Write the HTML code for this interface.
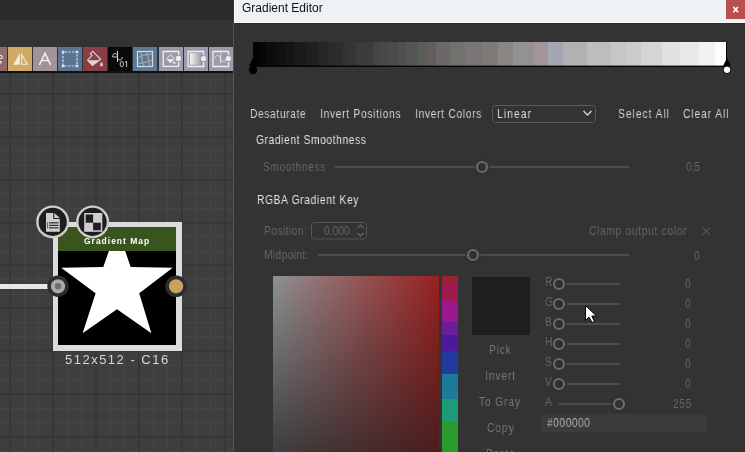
<!DOCTYPE html>
<html><head><meta charset="utf-8">
<style>
html,body{margin:0;padding:0;}
body{width:745px;height:452px;overflow:hidden;position:relative;background:#333333;font-family:"Liberation Sans",sans-serif;}
.a{position:absolute;}
.t{position:absolute;white-space:pre;font-family:"Liberation Sans",sans-serif;will-change:transform;}
svg{position:absolute;left:0;top:0;}
</style></head><body>

<!-- LEFT PANEL -->
<svg class="a" style="left:0;top:0" width="233" height="452" viewBox="0 0 233 452">
  <g transform="translate(0,73)">
    <rect x="0" y="0" width="233" height="379" fill="#3e3e3e"/>
    <g transform="translate(0,-73)"><rect x="-19" y="0" width="1" height="452" fill="#454545"/><rect x="-5" y="0" width="1" height="452" fill="#454545"/><rect x="24" y="0" width="1" height="452" fill="#454545"/><rect x="38" y="0" width="1" height="452" fill="#454545"/><rect x="67" y="0" width="1" height="452" fill="#454545"/><rect x="81" y="0" width="1" height="452" fill="#454545"/><rect x="110" y="0" width="1" height="452" fill="#454545"/><rect x="124" y="0" width="1" height="452" fill="#454545"/><rect x="153" y="0" width="1" height="452" fill="#454545"/><rect x="167" y="0" width="1" height="452" fill="#454545"/><rect x="196" y="0" width="1" height="452" fill="#454545"/><rect x="210" y="0" width="1" height="452" fill="#454545"/><rect x="238" y="0" width="1" height="452" fill="#454545"/><rect x="253" y="0" width="1" height="452" fill="#454545"/><rect x="281" y="0" width="1" height="452" fill="#454545"/><rect x="296" y="0" width="1" height="452" fill="#454545"/><rect x="0" y="65" width="233" height="1" fill="#454545"/><rect x="0" y="79" width="233" height="1" fill="#454545"/><rect x="0" y="108" width="233" height="1" fill="#454545"/><rect x="0" y="122" width="233" height="1" fill="#454545"/><rect x="0" y="150" width="233" height="1" fill="#454545"/><rect x="0" y="165" width="233" height="1" fill="#454545"/><rect x="0" y="193" width="233" height="1" fill="#454545"/><rect x="0" y="208" width="233" height="1" fill="#454545"/><rect x="0" y="236" width="233" height="1" fill="#454545"/><rect x="0" y="251" width="233" height="1" fill="#454545"/><rect x="0" y="279" width="233" height="1" fill="#454545"/><rect x="0" y="294" width="233" height="1" fill="#454545"/><rect x="0" y="322" width="233" height="1" fill="#454545"/><rect x="0" y="336" width="233" height="1" fill="#454545"/><rect x="0" y="365" width="233" height="1" fill="#454545"/><rect x="0" y="379" width="233" height="1" fill="#454545"/><rect x="0" y="408" width="233" height="1" fill="#454545"/><rect x="0" y="422" width="233" height="1" fill="#454545"/><rect x="0" y="451" width="233" height="1" fill="#454545"/><rect x="0" y="465" width="233" height="1" fill="#454545"/><rect x="0" y="494" width="233" height="1" fill="#454545"/><rect x="0" y="508" width="233" height="1" fill="#454545"/><rect x="-34" y="0" width="2" height="452" fill="#373737"/><rect x="9" y="0" width="2" height="452" fill="#373737"/><rect x="52" y="0" width="2" height="452" fill="#373737"/><rect x="95" y="0" width="2" height="452" fill="#373737"/><rect x="138" y="0" width="2" height="452" fill="#373737"/><rect x="181" y="0" width="2" height="452" fill="#373737"/><rect x="224" y="0" width="2" height="452" fill="#373737"/><rect x="266" y="0" width="2" height="452" fill="#373737"/><rect x="0" y="50" width="233" height="2" fill="#373737"/><rect x="0" y="93" width="233" height="2" fill="#373737"/><rect x="0" y="136" width="233" height="2" fill="#373737"/><rect x="0" y="179" width="233" height="2" fill="#373737"/><rect x="0" y="222" width="233" height="2" fill="#373737"/><rect x="0" y="264" width="233" height="2" fill="#373737"/><rect x="0" y="307" width="233" height="2" fill="#373737"/><rect x="0" y="350" width="233" height="2" fill="#373737"/><rect x="0" y="393" width="233" height="2" fill="#373737"/><rect x="0" y="436" width="233" height="2" fill="#373737"/><rect x="0" y="479" width="233" height="2" fill="#373737"/></g>
  </g>
  <rect x="0" y="0" width="233" height="73" fill="#333333" transform="translate(0,0)" opacity="0"/>
</svg>
<div class="a" style="left:0;top:0;width:233px;height:20px;background:#2b2b2b"></div>
<div class="a" style="left:0;top:20px;width:233px;height:51px;background:#333333"></div>
<div class="a" style="left:0;top:71px;width:233px;height:2px;background:#111111"></div>

<!-- toolbar icons -->
<svg class="a" width="233" height="80" viewBox="0 0 233 80">
  <rect x="-17" y="47" width="24" height="24" fill="#8f6a6e"/>
  <rect x="8" y="47" width="24" height="24" fill="#cfa965"/>
  <rect x="33" y="47" width="24" height="24" fill="#a4929a"/>
  <rect x="58" y="47" width="24" height="24" fill="#587593"/>
  <rect x="83" y="47" width="24" height="24" fill="#8b3e45"/>
  <rect x="108" y="47" width="24" height="24" fill="#0a0a0a"/>
  <rect x="133" y="47" width="24" height="24" fill="#5a7a9a"/>
  <rect x="159" y="47" width="24" height="24" fill="#9c9bab"/>
  <rect x="184" y="47" width="24" height="24" fill="#9c9bab"/>
  <rect x="209" y="47" width="24" height="24" fill="#9c9bab"/>
  <!-- partial icon marks -->
  <path d="M0,55.5 L1.5,55.5 L2.5,57 L1.5,58.5 L0,58.5" fill="none" stroke="#e8e8e8" stroke-width="1.1"/>
  <rect x="0" y="61" width="1.5" height="2.5" fill="#e8e8e8"/>
  <!-- mirror icon -->
  <polygon points="19.8,53 13.2,64.8 19.8,64.8" fill="#ececec"/>
  <polygon points="21.6,54.5 21.6,64.3 27.3,64.3" fill="none" stroke="#ececec" stroke-width="1.1"/>
  <!-- A icon -->
  <path d="M39.4,64.8 L45,53.2 L50.6,64.8 M41.5,60.6 L48.5,60.6" fill="none" stroke="#f0f0f0" stroke-width="1.5"/>
  <!-- dashed square -->
  <rect x="63" y="52" width="14" height="14" fill="none" stroke="#dcdcdc" stroke-width="1.2" stroke-dasharray="2.4,1.3" stroke-dashoffset="-1.6"/>
  <rect x="61.7" y="50.7" width="2.6" height="2.6" fill="#dcdcdc"/>
  <rect x="75.7" y="50.7" width="2.6" height="2.6" fill="#dcdcdc"/>
  <rect x="61.7" y="64.7" width="2.6" height="2.6" fill="#dcdcdc"/>
  <rect x="75.7" y="64.7" width="2.6" height="2.6" fill="#dcdcdc"/>
  <!-- paint bucket -->
  <path d="M92.8,51.3 L100.6,59.3 L92.5,65.4 L87.6,60.2 L92,55.6 L90.3,54 Z" fill="none" stroke="#d8d8d8" stroke-width="1.1"/>
  <polygon points="88,60.3 99.8,60.3 92.5,65.2" fill="#d8d8d8"/>
  <path d="M101.5,61.8 Q103.2,64.3 103,65.3 A1.55,1.55 0 0 1 100,65.3 Q99.8,64.3 101.5,61.8 Z" fill="#d0d0d0"/>
  <!-- sine 01 -->
  <path d="M112.6,57 C112.6,52.2 117.4,52.2 117.4,57 C117.4,61 122.4,61 122.4,57 M112.6,57 L117.4,57" fill="none" stroke="#d0d0d0" stroke-width="0.95"/>
  <rect x="117" y="51" width="1" height="11" fill="#d0d0d0"/>
  <ellipse cx="121.8" cy="64.1" rx="1.7" ry="2.6" fill="none" stroke="#d8d8d8" stroke-width="0.9"/>
  <path d="M125,62.3 L126.6,61.3 L126.6,67" fill="none" stroke="#d8d8d8" stroke-width="0.9"/>
  <!-- cells -->
  <rect x="137.5" y="51.5" width="15" height="15" fill="none" stroke="#e0dcd5" stroke-width="1.2"/>
  <path d="M141.5,55.5 L147.5,54.5 L149,61.5 L142.5,63 Z M141.5,55.5 L138,58 M147.5,54.5 L145.5,51.5 M149,61.5 L152.5,59.5 M142.5,63 L144.5,66.5 M141.5,55.5 L140.5,51.5 M147.5,54.5 L152.5,54 M149,61.5 L149.5,66.5 M142.5,63 L137.5,63.5" fill="none" stroke="#b8b0aa" stroke-width="1"/>
  <!-- bracket icons -->
  <path d="M178.7,55 L178.7,51.5 L163.2,51.5 L163.2,66.4 L178.7,66.4 L178.7,62" fill="none" stroke="#f0f0f0" stroke-width="1.3"/>
  <circle cx="178.4" cy="58.4" r="2.6" fill="#ececec"/>
  <path d="M166.5,59 L170.5,54.5 L174.5,59" fill="none" stroke="#f0f0f0" stroke-width="0.9"/>
  <polygon points="166.3,59.3 174.7,59.3 170.5,63" fill="#f0f0f0"/>
  <rect x="173.4" y="61.8" width="2" height="2" fill="#f0f0f0"/>

  <path d="M203.6,55 L203.6,51.5 L188.1,51.5 L188.1,66.5 L203.6,66.5 L203.6,62" fill="none" stroke="#f0f0f0" stroke-width="1.3"/>
  <defs><linearGradient id="ig" x1="0" x2="1"><stop offset="0" stop-color="#f4f4f4"/><stop offset="1" stop-color="#a8a8a8"/></linearGradient></defs>
  <rect x="190" y="53.2" width="10" height="11.6" fill="url(#ig)"/>
  <circle cx="203.5" cy="58.5" r="2.6" fill="#ececec"/>

  <path d="M228.5,55 L228.5,51.5 L213,51.5 L213,66.5 L228.5,66.5 L228.5,62" fill="none" stroke="#f0f0f0" stroke-width="1.3"/>
  <path d="M215,58.5 C215.5,54.5 219.5,54.5 220.5,58.5 C221.5,62.5 225.5,62.5 226.5,58.5" fill="none" stroke="#e0e0e0" stroke-width="0.9"/>
  <rect x="220.1" y="53.5" width="1" height="10" fill="#e4e4e4"/>
  <circle cx="228.4" cy="58.5" r="2.6" fill="#ececec"/>
</svg>

<!-- node -->
<svg class="a" width="233" height="452" viewBox="0 0 233 452">
  <rect x="0" y="284" width="50" height="5" fill="#e6e6e6"/>
  <rect x="53" y="222" width="129" height="129" fill="#dcdcdc"/>
  <rect x="58" y="227" width="118" height="118" fill="#000"/>
  <polygon fill="#fff" points="117,227.3 130.7,267.1 172.7,267.8 139.2,293.2 151.4,333.3 117,309.2 82.6,333.3 95.6,293.2 61.2,267.8 103.3,267.1"/>
  <rect x="58" y="227" width="118" height="24" fill="#3a5420"/>
  <circle cx="58" cy="286.3" r="10.7" fill="#2d2d2d"/>
  <circle cx="58" cy="286.3" r="7.1" fill="#aaaaaa"/>
  <circle cx="58" cy="286.3" r="3.2" fill="#6f6f6f"/>
  <circle cx="176.1" cy="286.3" r="10.8" fill="#2d2d2d"/>
  <circle cx="176.1" cy="286.3" r="7.1" fill="#c9a25e"/>
  <circle cx="52.7" cy="221.9" r="15.3" fill="#1e1e1e" stroke="#d0cccc" stroke-width="2.4"/>
  <circle cx="92.6" cy="221.9" r="15.3" fill="#1e1e1e" stroke="#d0cccc" stroke-width="2.4"/>
  <path d="M46,213 L53.2,213 L53.2,219 L59.8,219 L59.8,231.8 L46,231.8 Z" fill="#cfcfcf"/>
  <path d="M54.3,213 L59.8,218 L54.3,218 Z" fill="#cfcfcf"/>
  <rect x="49" y="222.3" width="9.5" height="1.1" fill="#1e1e1e"/>
  <rect x="49" y="224.8" width="9.5" height="1.1" fill="#1e1e1e"/>
  <rect x="49" y="227.3" width="9.5" height="1.1" fill="#1e1e1e"/>
  <rect x="47" y="222.3" width="1.1" height="6.1" fill="#1e1e1e" opacity="0.6"/>
  <rect x="84.2" y="213" width="18.1" height="18.8" fill="#cfcfcf"/>
  <rect x="85.7" y="214.5" width="7.4" height="8.2" fill="#1e1e1e"/>
  <rect x="93.1" y="222.7" width="7.7" height="7.6" fill="#1e1e1e"/>
</svg>

<!-- DIALOG -->
<div class="a" style="left:233px;top:23px;width:1px;height:429px;background:#555252"></div>
<div class="a" style="left:234px;top:0;width:511px;height:23px;background:#eef2f5"></div>
<div class="a" style="left:234px;top:0;width:1px;height:23px;background:#fafdff"></div>
<div class="a" style="left:234px;top:22px;width:511px;height:1px;background:#fafdff"></div>
<div class="a" style="left:234px;top:23px;width:511px;height:1px;background:#2a2a2a"></div>
<div class="a" style="left:726px;top:0;width:19px;height:19px;background:#b94f50"></div>
<svg class="a" width="745" height="30" viewBox="0 0 745 30"><path d="M733.4,7 L738,12.2 M738,7 L733.4,12.2" stroke="#fff" stroke-width="1.7"/></svg>

<svg class="a" width="745" height="452" viewBox="0 0 745 452">
  <rect x="253" y="42" width="6" height="24" fill="#020202"/><rect x="259" y="42" width="7" height="24" fill="#060606"/><rect x="266" y="42" width="10" height="24" fill="#0c0c0c"/><rect x="276" y="42" width="9" height="24" fill="#101010"/><rect x="285" y="42" width="9" height="24" fill="#151515"/><rect x="294" y="42" width="13" height="24" fill="#1a1a1a"/><rect x="307" y="42" width="11" height="24" fill="#1f1f1f"/><rect x="318" y="42" width="10" height="24" fill="#262626"/><rect x="328" y="42" width="7" height="24" fill="#2a2a2a"/><rect x="335" y="42" width="8" height="24" fill="#2d2d2d"/><rect x="343" y="42" width="6" height="24" fill="#333333"/><rect x="349" y="42" width="7" height="24" fill="#363434"/><rect x="356" y="42" width="17" height="24" fill="#3c3c3c"/><rect x="373" y="42" width="7" height="24" fill="#444444"/><rect x="380" y="42" width="9" height="24" fill="#484848"/><rect x="389" y="42" width="5" height="24" fill="#4b4b4b"/><rect x="394" y="42" width="4" height="24" fill="#4e4846"/><rect x="398" y="42" width="8" height="24" fill="#4f4f55"/><rect x="406" y="42" width="11" height="24" fill="#555555"/><rect x="417" y="42" width="11" height="24" fill="#5b5d58"/><rect x="428" y="42" width="8" height="24" fill="#665d5d"/><rect x="436" y="42" width="14" height="24" fill="#6a6868"/><rect x="450" y="42" width="15" height="24" fill="#70726d"/><rect x="465" y="42" width="17" height="24" fill="#7a7574"/><rect x="482" y="42" width="16" height="24" fill="#807a77"/><rect x="498" y="42" width="15" height="24" fill="#888784"/><rect x="513" y="42" width="21" height="24" fill="#909293"/><rect x="534" y="42" width="14" height="24" fill="#a39599"/><rect x="548" y="42" width="15" height="24" fill="#a6a6b3"/><rect x="563" y="42" width="24" height="24" fill="#b2b0b0"/><rect x="587" y="42" width="24" height="24" fill="#bebebe"/><rect x="611" y="42" width="15" height="24" fill="#c6c6c6"/><rect x="626" y="42" width="15" height="24" fill="#cbcbcb"/><rect x="641" y="42" width="21" height="24" fill="#d5d5d5"/><rect x="662" y="42" width="18" height="24" fill="#e1e1e1"/><rect x="680" y="42" width="19" height="24" fill="#e9e9e9"/><rect x="699" y="42" width="11" height="24" fill="#f2f2f2"/><rect x="710" y="42" width="5" height="24" fill="#eef2f5"/><rect x="715" y="42" width="12" height="24" fill="#fdfdfd"/>
  <rect x="253" y="65.6" width="474.5" height="1.3" fill="#000"/>
  <rect x="726" y="42" width="1" height="24" fill="#000"/>
  <polygon points="253,58 249,66 257,66" fill="#000"/>
  <circle cx="253" cy="70" r="4.2" fill="#000"/>
  <polygon points="727,58 723,66 731,66" fill="#000"/>
  <circle cx="727" cy="69.8" r="3.8" fill="#fff" stroke="#000" stroke-width="1"/>

  <!-- dropdown -->
  <rect x="492.5" y="105.5" width="103" height="17" rx="3" fill="#333" stroke="#5a5a5a" stroke-width="1"/>
  <polyline points="583.5,111 587.5,115 591.5,111" fill="none" stroke="#cfcfcf" stroke-width="1.5"/>

  <rect x="335" y="166" width="294" height="2" fill="#4d4d4d"/><circle cx="482" cy="167" r="7.5" fill="#303030"/><circle cx="482" cy="167" r="5" fill="none" stroke="#6b6b68" stroke-width="2.2"/><rect x="318" y="254" width="311" height="2" fill="#4d4d4d"/><circle cx="473" cy="255" r="7.5" fill="#303030"/><circle cx="473" cy="255" r="5" fill="none" stroke="#6b6b68" stroke-width="2.2"/><rect x="559" y="283" width="61" height="2" fill="#4d4d4d"/><circle cx="559" cy="284" r="7.5" fill="#303030"/><circle cx="559" cy="284" r="5" fill="none" stroke="#6b6b68" stroke-width="2.2"/><rect x="559" y="303" width="61" height="2" fill="#4d4d4d"/><circle cx="559" cy="304" r="7.5" fill="#303030"/><circle cx="559" cy="304" r="5" fill="none" stroke="#6b6b68" stroke-width="2.2"/><rect x="559" y="323" width="61" height="2" fill="#4d4d4d"/><circle cx="559" cy="324" r="7.5" fill="#303030"/><circle cx="559" cy="324" r="5" fill="none" stroke="#6b6b68" stroke-width="2.2"/><rect x="559" y="343" width="61" height="2" fill="#4d4d4d"/><circle cx="559" cy="344" r="7.5" fill="#303030"/><circle cx="559" cy="344" r="5" fill="none" stroke="#6b6b68" stroke-width="2.2"/><rect x="559" y="363" width="61" height="2" fill="#4d4d4d"/><circle cx="559" cy="364" r="7.5" fill="#303030"/><circle cx="559" cy="364" r="5" fill="none" stroke="#6b6b68" stroke-width="2.2"/><rect x="559" y="383" width="61" height="2" fill="#4d4d4d"/><circle cx="559" cy="384" r="7.5" fill="#303030"/><circle cx="559" cy="384" r="5" fill="none" stroke="#6b6b68" stroke-width="2.2"/><rect x="559" y="403" width="61" height="2" fill="#4d4d4d"/><circle cx="619" cy="404" r="7.5" fill="#303030"/><circle cx="619" cy="404" r="5" fill="none" stroke="#6b6b68" stroke-width="2.2"/>

  <!-- spinbox -->
  <rect x="311.5" y="222.5" width="55" height="16.5" rx="3" fill="#333" stroke="#555" stroke-width="1"/>
  <polyline points="357.5,228 360.5,225 363.5,228" fill="none" stroke="#666" stroke-width="1.2"/>
  <polyline points="357.5,233 360.5,236 363.5,233" fill="none" stroke="#666" stroke-width="1.2"/>
  <!-- clamp x -->
  <path d="M702.5,227.5 L710,235 M710,227.5 L702.5,235" stroke="#626262" stroke-width="1"/>

  <!-- picker -->
  <defs>
    <linearGradient id="gh" x1="0" y1="0" x2="1" y2="0">
      <stop offset="0" stop-color="#8f9193"/>
      <stop offset="1" stop-color="#9a2020"/>
    </linearGradient>
    <linearGradient id="gb" x1="0" y1="0" x2="1" y2="0">
      <stop offset="0" stop-color="#3d3e3f"/>
      <stop offset="1" stop-color="#4a1e1e"/>
    </linearGradient>
    <linearGradient id="gv" x1="0" y1="0" x2="0" y2="1">
      <stop offset="0" stop-color="#000"/>
      <stop offset="1" stop-color="#fff"/>
    </linearGradient>
    <mask id="mv" maskUnits="userSpaceOnUse" x="273" y="276" width="166" height="176"><rect x="273" y="276" width="166" height="176" fill="url(#gv)"/></mask>
  </defs>
  <rect x="273" y="276" width="166" height="176" fill="url(#gh)"/>
  <rect x="273" y="276" width="166" height="176" fill="url(#gb)" mask="url(#mv)"/>
  <rect x="442" y="276" width="16" height="6" fill="#98232a"/><rect x="442" y="282" width="16" height="19" fill="#9c1a4f"/><rect x="442" y="301" width="16" height="21" fill="#9a1a8c"/><rect x="442" y="322" width="16" height="13" fill="#6a1f9a"/><rect x="442" y="335" width="16" height="16" fill="#4a1a9a"/><rect x="442" y="351" width="16" height="23" fill="#1f3a9c"/><rect x="442" y="374" width="16" height="25" fill="#1e7a9a"/><rect x="442" y="399" width="16" height="23" fill="#1e9a78"/><rect x="442" y="422" width="16" height="30" fill="#2a9a2a"/>
  <rect x="472" y="277" width="58" height="58" fill="#1e1e1e"/>

  <!-- hex box -->
  <rect x="541" y="414" width="166" height="18" rx="3" fill="#3b3b3b"/>

  <!-- cursor -->
  <path d="M585.5,305.5 L585.5,320.5 L589,317 L592,322.5 L594.5,321.5 L591.8,316 L596.5,316 Z" fill="#fff" stroke="#000" stroke-width="1"/>
</svg>

<div class="t" style="left:242.4px;top:2px;font-size:12px;line-height:12px;color:#111;letter-spacing:-0.00px;font-weight:400;">Gradient Editor</div>
<div class="t" style="left:249.7px;top:108px;font-size:12px;line-height:12px;color:#d2d2d2;letter-spacing:0.76px;font-weight:400;transform:scaleX(0.85);transform-origin:0 0;">Desaturate</div>
<div class="t" style="left:319.9px;top:108px;font-size:12px;line-height:12px;color:#d2d2d2;letter-spacing:0.85px;font-weight:400;transform:scaleX(0.85);transform-origin:0 0;">Invert Positions</div>
<div class="t" style="left:415.0px;top:108px;font-size:12px;line-height:12px;color:#d2d2d2;letter-spacing:0.83px;font-weight:400;transform:scaleX(0.85);transform-origin:0 0;">Invert Colors</div>
<div class="t" style="left:496.9px;top:108px;font-size:12px;line-height:12px;color:#dedede;letter-spacing:1.33px;font-weight:400;transform:scaleX(0.85);transform-origin:0 0;">Linear</div>
<div class="t" style="left:617.8px;top:108px;font-size:12px;line-height:12px;color:#d2d2d2;letter-spacing:1.18px;font-weight:400;transform:scaleX(0.85);transform-origin:0 0;">Select All</div>
<div class="t" style="left:683.3px;top:108px;font-size:12px;line-height:12px;color:#d2d2d2;letter-spacing:1.11px;font-weight:400;transform:scaleX(0.85);transform-origin:0 0;">Clear All</div>
<div class="t" style="left:255.7px;top:134px;font-size:12px;line-height:12px;color:#e4e4e4;letter-spacing:0.73px;font-weight:400;transform:scaleX(0.85);transform-origin:0 0;">Gradient Smoothness</div>
<div class="t" style="left:263.0px;top:161px;font-size:12px;line-height:12px;color:#666666;letter-spacing:0.72px;font-weight:400;transform:scaleX(0.85);transform-origin:0 0;">Smoothness</div>
<div class="t" style="left:685.9px;top:161px;font-size:12px;line-height:12px;color:#666666;letter-spacing:-0.21px;font-weight:400;transform:scaleX(0.85);transform-origin:0 0;">0.5</div>
<div class="t" style="left:256.8px;top:194px;font-size:12px;line-height:12px;color:#e4e4e4;letter-spacing:0.79px;font-weight:400;transform:scaleX(0.85);transform-origin:0 0;">RGBA Gradient Key</div>
<div class="t" style="left:264.0px;top:225px;font-size:12px;line-height:12px;color:#666666;letter-spacing:0.53px;font-weight:400;transform:scaleX(0.85);transform-origin:0 0;">Position:</div>
<div class="t" style="left:323.9px;top:225px;font-size:12px;line-height:12px;color:#666666;letter-spacing:0.03px;font-weight:400;transform:scaleX(0.85);transform-origin:0 0;">0.000</div>
<div class="t" style="left:589.1px;top:225px;font-size:12px;line-height:12px;color:#666666;letter-spacing:0.82px;font-weight:400;transform:scaleX(0.85);transform-origin:0 0;">Clamp output color</div>
<div class="t" style="left:264.0px;top:249px;font-size:12px;line-height:12px;color:#666666;letter-spacing:0.47px;font-weight:400;transform:scaleX(0.85);transform-origin:0 0;">Midpoint:</div>
<div class="t" style="left:694.0px;top:250px;font-size:12px;line-height:12px;color:#666666;letter-spacing:0.00px;font-weight:400;transform:scaleX(0.85);transform-origin:0 0;">0</div>
<div class="t" style="left:489.4px;top:344px;font-size:12px;line-height:12px;color:#767676;letter-spacing:0.96px;font-weight:400;transform:scaleX(0.85);transform-origin:0 0;">Pick</div>
<div class="t" style="left:484.9px;top:370px;font-size:12px;line-height:12px;color:#767676;letter-spacing:1.06px;font-weight:400;transform:scaleX(0.85);transform-origin:0 0;">Invert</div>
<div class="t" style="left:479.3px;top:396px;font-size:12px;line-height:12px;color:#767676;letter-spacing:1.02px;font-weight:400;transform:scaleX(0.85);transform-origin:0 0;">To Gray</div>
<div class="t" style="left:486.9px;top:422px;font-size:12px;line-height:12px;color:#767676;letter-spacing:1.14px;font-weight:400;transform:scaleX(0.85);transform-origin:0 0;">Copy</div>
<div class="t" style="left:485.9px;top:448px;font-size:12px;line-height:12px;color:#767676;letter-spacing:0.72px;font-weight:400;transform:scaleX(0.85);transform-origin:0 0;">Paste</div>
<div class="t" style="left:544.6px;top:276px;font-size:12px;line-height:12px;color:#666666;letter-spacing:0.00px;font-weight:400;transform:scaleX(0.85);transform-origin:0 0;">R</div>
<div class="t" style="left:544.6px;top:296px;font-size:12px;line-height:12px;color:#666666;letter-spacing:0.00px;font-weight:400;transform:scaleX(0.85);transform-origin:0 0;">G</div>
<div class="t" style="left:544.6px;top:316px;font-size:12px;line-height:12px;color:#666666;letter-spacing:0.00px;font-weight:400;transform:scaleX(0.85);transform-origin:0 0;">B</div>
<div class="t" style="left:544.6px;top:336px;font-size:12px;line-height:12px;color:#666666;letter-spacing:0.00px;font-weight:400;transform:scaleX(0.85);transform-origin:0 0;">H</div>
<div class="t" style="left:544.6px;top:356px;font-size:12px;line-height:12px;color:#666666;letter-spacing:0.00px;font-weight:400;transform:scaleX(0.85);transform-origin:0 0;">S</div>
<div class="t" style="left:544.6px;top:376px;font-size:12px;line-height:12px;color:#666666;letter-spacing:0.00px;font-weight:400;transform:scaleX(0.85);transform-origin:0 0;">V</div>
<div class="t" style="left:544.6px;top:396px;font-size:12px;line-height:12px;color:#666666;letter-spacing:0.00px;font-weight:400;transform:scaleX(0.85);transform-origin:0 0;">A</div>
<div class="t" style="left:684.8px;top:278px;font-size:12px;line-height:12px;color:#666666;letter-spacing:0.00px;font-weight:400;transform:scaleX(0.85);transform-origin:0 0;">0</div>
<div class="t" style="left:684.8px;top:298px;font-size:12px;line-height:12px;color:#666666;letter-spacing:0.00px;font-weight:400;transform:scaleX(0.85);transform-origin:0 0;">0</div>
<div class="t" style="left:684.8px;top:318px;font-size:12px;line-height:12px;color:#666666;letter-spacing:0.00px;font-weight:400;transform:scaleX(0.85);transform-origin:0 0;">0</div>
<div class="t" style="left:684.8px;top:338px;font-size:12px;line-height:12px;color:#666666;letter-spacing:0.00px;font-weight:400;transform:scaleX(0.85);transform-origin:0 0;">0</div>
<div class="t" style="left:684.8px;top:358px;font-size:12px;line-height:12px;color:#666666;letter-spacing:0.00px;font-weight:400;transform:scaleX(0.85);transform-origin:0 0;">0</div>
<div class="t" style="left:684.8px;top:378px;font-size:12px;line-height:12px;color:#666666;letter-spacing:0.00px;font-weight:400;transform:scaleX(0.85);transform-origin:0 0;">0</div>
<div class="t" style="left:672.8px;top:398px;font-size:12px;line-height:12px;color:#666666;letter-spacing:0.70px;font-weight:400;transform:scaleX(0.85);transform-origin:0 0;">255</div>
<div class="t" style="left:547.0px;top:417px;font-size:12px;line-height:12px;color:#b4b4b4;letter-spacing:0.63px;font-weight:400;transform:scaleX(0.85);transform-origin:0 0;">#000000</div>
<div class="t" style="left:64.6px;top:353px;font-size:13px;line-height:13px;color:#d6d6d6;letter-spacing:1.49px;font-weight:400;">512x512 - C16</div>
<div class="t" style="left:84.2px;top:237px;font-size:8.5px;line-height:8.5px;color:#ffffff;letter-spacing:0.99px;font-weight:700;">Gradient Map</div>

</body></html>
